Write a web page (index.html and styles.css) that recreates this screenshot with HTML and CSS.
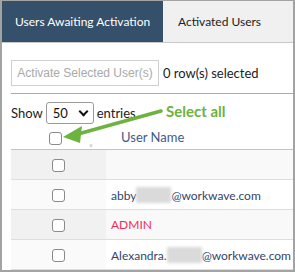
FILE: index.html
```html
<!DOCTYPE html>
<html lang="en">
<head>
    <meta charset="UTF-8">
    <title>Users Awaiting Activation</title>
    <link rel="stylesheet" href="styles.css">
</head>
<body>
    <div class="frame">
        <div class="tabs">
            <div class="tab active">Users Awaiting Activation</div>
            <div class="tab">Activated Users</div>
        </div>
        <div class="panel">
            <div class="toolbar">
                <button class="activate-btn" disabled>Activate Selected User(s)</button>
                <span class="selected-count">0 row(s) selected</span>
            </div>
            <div class="length-row">
                <span>Show</span>
                <span class="length-select">50 <span class="chevron"></span></span>
                <span>entries</span>
            </div>
            <table class="users">
                <colgroup>
                    <col class="check-width">
                    <col>
                </colgroup>
                <thead>
                    <tr>
                        <th class="check-col"><input type="checkbox" class="cb"><span class="sort">&#9660;</span></th>
                        <th class="name-col">User Name</th>
                    </tr>
                </thead>
                <tbody>
                    <tr class="odd">
                        <td class="check-col"><input type="checkbox" class="cb"></td>
                        <td></td>
                    </tr>
                    <tr class="even">
                        <td class="check-col"><input type="checkbox" class="cb"></td>
                        <td>abby<span class="blur"></span>@workwave.com</td>
                    </tr>
                    <tr class="odd">
                        <td class="check-col"><input type="checkbox" class="cb"></td>
                        <td class="admin">ADMIN</td>
                    </tr>
                    <tr class="even">
                        <td class="check-col"><input type="checkbox" class="cb"></td>
                        <td>Alexandra.<span class="blur"></span>@workwave.com</td>
                    </tr>
                </tbody>
            </table>
        </div>
        <!-- callout drawn over the table -->
        <div class="callout">Select all</div>
        <svg class="callout-arrow" width="295" height="272" viewBox="0 0 295 272">
            <line x1="161" y1="111" x2="78" y2="134" stroke="#6cb33f" stroke-width="3.5" stroke-linecap="round"/>
            <polygon points="63,137 82,126 80,143" fill="#6cb33f"/>
        </svg>
    </div>
</body>
</html>
```

FILE: styles.css
```css
body {
    margin: 0;
    font-family: Lato, "Noto Sans", sans-serif;
    font-size: 13px;
    color: #222;
}

.frame {
    position: relative;
    width: 295px;
    height: 272px;
    box-sizing: border-box;
    border: 1px solid #a3a3a3;
    border-left-width: 2px;
    border-right-width: 2px;
    border-bottom-width: 2px;
    overflow: hidden;
    background: #fff;
    white-space: nowrap;
}

.tabs {
    display: flex;
    height: 41px;
    background: #f0f0f0;
    border-bottom: 1px solid #c8c8c8;
}

.tab {
    display: flex;
    align-items: center;
    padding: 0 15px;
    font-size: 12px;
    color: #222;
}

.tab.active {
    width: 162px;
    box-sizing: border-box;
    padding-left: 14px;
    margin-left: -1px;
    background: #35506b;
    color: #fff;
}

.panel {
    padding-left: 9px;
}

.toolbar {
    display: flex;
    align-items: center;
    height: 26px;
    margin-top: 17px;
    padding-bottom: 7px;
    border-bottom: 1px solid #a8a8a8;
}

.activate-btn {
    height: 26px;
    width: 148px;
    padding: 0;
    border: 1px solid #cfcfcf;
    background: #fff;
    color: #a9a9a9;
    font-family: "Liberation Sans", Arial, sans-serif;
    font-size: 12px;
}

.selected-count {
    margin-left: 4px;
}

.length-row {
    display: flex;
    align-items: center;
    height: 22px;
    margin-top: 8px;
    gap: 3px;
}

.length-select {
    display: flex;
    align-items: center;
    justify-content: space-between;
    width: 48px;
    height: 22px;
    box-sizing: border-box;
    padding: 0 6px 0 6px;
    border: 1px solid #9a9a9a;
    border-radius: 3px;
    color: #111;
}

.chevron {
    width: 5px;
    height: 5px;
    border-right: 2px solid #111;
    border-bottom: 2px solid #111;
    transform: rotate(45deg);
    margin-top: -4px;
}

.users {
    width: 100%;
    table-layout: fixed;
    border-collapse: collapse;
}

.check-width {
    width: 95px;
}

.users th {
    height: 25px;
    padding: 0;
    font-weight: normal;
    text-align: left;
    border-bottom: 1px solid #c4c4c4;
}

.users td {
    height: 29px;
    padding: 0 0 0 5px;
    border-bottom: 1px solid #dedede;
    color: #31466a;
    font-size: 12px;
}

.users .check-col {
    padding: 0;
    text-align: center;
}

.users th.check-col {
    position: relative;
    padding-right: 7px;
}

.users .name-col {
    padding-left: 15px;
    color: #3e5c8a;
}

.sort {
    position: absolute;
    right: 12px;
    bottom: 0;
    font-size: 6px;
    color: #d0d0d0;
}

.cb {
    appearance: none;
    width: 13px;
    height: 13px;
    margin: 0;
    vertical-align: middle;
    border: 1px solid #8a8a8a;
    border-radius: 3px;
    background: #fff;
}

.odd td {
    background: #f9f9f9;
}

.odd td.check-col {
    background: #f1f1f1;
}

.even td.check-col {
    background: #fafafa;
}

.admin {
    color: #ec2f5b !important;
}

.blur {
    display: inline-block;
    width: 35px;
    height: 16px;
    vertical-align: -3px;
    background: #dadada;
    filter: blur(1.5px);
}

.callout {
    position: absolute;
    left: 164px;
    top: 101px;
    font-family: Lato, sans-serif;
    font-weight: bold;
    font-size: 15px;
    color: #6cb33f;
}

.callout-arrow {
    position: absolute;
    left: -2px;
    top: -1px;
}
```
